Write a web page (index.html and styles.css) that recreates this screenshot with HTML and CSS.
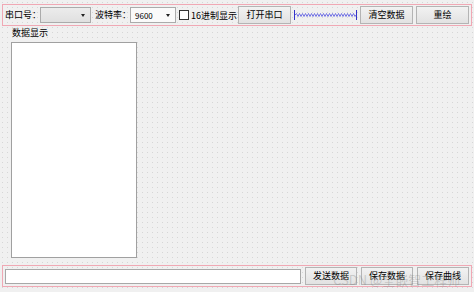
FILE: index.html
```html
<!DOCTYPE html>
<html>
<head>
<meta charset="utf-8">
<link rel="stylesheet" href="styles.css">
</head>
<body>
<div class="form">
  <div class="toolbar">
    <span class="label">串口号：</span>
    <div class="combo c1"><span class="val"></span><span class="arrow"></span></div>
    <span class="label l2">波特率：</span>
    <div class="combo c2"><span class="val">9600</span><span class="arrow"></span></div>
    <label class="check"><span class="box"></span><span>16进制显示</span></label>
    <button class="btn b-open">打开串口</button>
    <div class="spacer">
      <svg width="63" height="12" viewBox="0 0 63 12">
        <line x1="0.5" y1="1" x2="0.5" y2="11" stroke="#3434c8" stroke-width="1"/>
        <line x1="62.5" y1="1" x2="62.5" y2="11" stroke="#3434c8" stroke-width="1"/>
        <polyline fill="none" stroke="#7474e4" stroke-width="1" points="1,6 2.5,4.5 4,7.5 5.5,4.5 7,7.5 8.5,4.5 10,7.5 11.5,4.5 13,7.5 14.5,4.5 16,7.5 17.5,4.5 19,7.5 20.5,4.5 22,7.5 23.5,4.5 25,7.5 26.5,4.5 28,7.5 29.5,4.5 31,7.5 32.5,4.5 34,7.5 35.5,4.5 37,7.5 38.5,4.5 40,7.5 41.5,4.5 43,7.5 44.5,4.5 46,7.5 47.5,4.5 49,7.5 50.5,4.5 52,7.5 53.5,4.5 55,7.5 56.5,4.5 58,7.5 59.5,4.5 61,7.5 62,6"/>
      </svg>
    </div>
    <button class="btn b-clear">清空数据</button>
    <button class="btn b-redraw">重绘</button>
  </div>
  <div class="middle">
    <div class="group">
      <div class="group-title">数据显示</div>
      <div class="textedit"></div>
    </div>
  </div>
  <div class="bottombar">
    <input class="lineedit" type="text">
    <button class="btn">发送数据</button>
    <button class="btn">保存数据</button>
    <button class="btn">保存曲线</button>
  </div>
</div>
<div class="watermark">CSDN @全嵌智工程师</div>
</body>
</html>
```

FILE: styles.css
```css
html, body {
  margin: 0;
  padding: 0;
}
body {
  width: 474px;
  height: 292px;
  overflow: hidden;
  position: relative;
  background-color: #f0f0f0;
  background-image: radial-gradient(circle, #d6d6d6 0.6px, transparent 0.9px);
  background-size: 5px 5px;
  font-family: "Noto Sans CJK SC", "DejaVu Sans", sans-serif;
  font-size: 9px;
  color: #000;
}
.form {
  display: flex;
  flex-direction: column;
  height: 292px;
  padding: 4px 2px 0 2px;
  box-sizing: border-box;
}
.toolbar {
  display: flex;
  align-items: center;
  height: 22px;
  box-sizing: border-box;
  border: 1px solid #f0a8b4;
  padding: 0 0 0 2px;
}
.label {
  width: 35px;
  flex: none;
  white-space: nowrap;
  line-height: 14px;
}
.l2 { margin-left: 4px; }
.combo {
  flex: none;
  height: 16px;
  box-sizing: border-box;
  border: 1px solid #ababab;
  display: flex;
  align-items: center;
  justify-content: space-between;
  padding: 0 5px 0 4px;
  font-size: 8px;
}
.c1 { width: 51px; background: linear-gradient(#ececec, #e0e0e0); }
.c2 { width: 46px; background: #fafafa; }
.arrow {
  width: 0;
  height: 0;
  border-left: 2.5px solid transparent;
  border-right: 2.5px solid transparent;
  border-top: 3px solid #222;
}
.check {
  flex: none;
  width: 56px;
  display: flex;
  align-items: center;
  margin-left: 3px;
  gap: 2px;
  white-space: nowrap;
}
.box {
  flex: none;
  width: 10px;
  height: 10px;
  box-sizing: border-box;
  border: 1px solid #333;
  background: #fff;
}
.btn {
  flex: none;
  height: 18px;
  box-sizing: border-box;
  border: 1px solid #b4b4b4;
  background: linear-gradient(#f2f2f2, #e2e2e2);
  font-family: "Noto Sans CJK SC", "DejaVu Sans", sans-serif;
  font-size: 9px;
  line-height: 12px;
  padding: 0;
  width: 53px;
  color: #000;
}
.b-open { margin-left: 3px; }
.spacer {
  flex: none;
  width: 63px;
  height: 12px;
  margin-left: 3px;
  display: flex;
}
.b-clear { margin-left: 3px; }
.b-redraw { margin-left: 3px; }
.middle {
  flex: 1;
  display: flex;
  padding: 0 0 0 6px;
}
.group {
  width: 135px;
  display: flex;
  flex-direction: column;
  padding: 0 0 7px 3px;
  box-sizing: border-box;
}
.group-title {
  line-height: 12px;
  padding: 1px 0 0 1px;
  height: 15px;
  box-sizing: border-box;
}
.textedit {
  margin-top: 1px;
  flex: 1;
  width: 126px;
  box-sizing: border-box;
  border: 1px solid #a0a0a0;
  background: #fff;
}
.bottombar {
  display: flex;
  align-items: center;
  height: 22px;
  box-sizing: border-box;
  border: 1px solid #f0a8b4;
  padding: 0 0 0 2px;
  margin-bottom: 5px;
}
.lineedit {
  flex: none;
  width: 296px;
  height: 15px;
  box-sizing: border-box;
  border: 1px solid #a8a8a8;
  background: #fff;
  padding: 0;
  margin: 0 4px 0 0;
}
.bottombar .btn { width: 52px; margin-right: 4px; }
.bottombar .btn:nth-of-type(3) { margin-right: 3px; }
.watermark {
  position: absolute;
  left: 333px;
  top: 272px;
  font-size: 13px;
  line-height: 16px;
  color: rgba(120,120,120,0.3);
  white-space: nowrap;
  pointer-events: none;
}
```
